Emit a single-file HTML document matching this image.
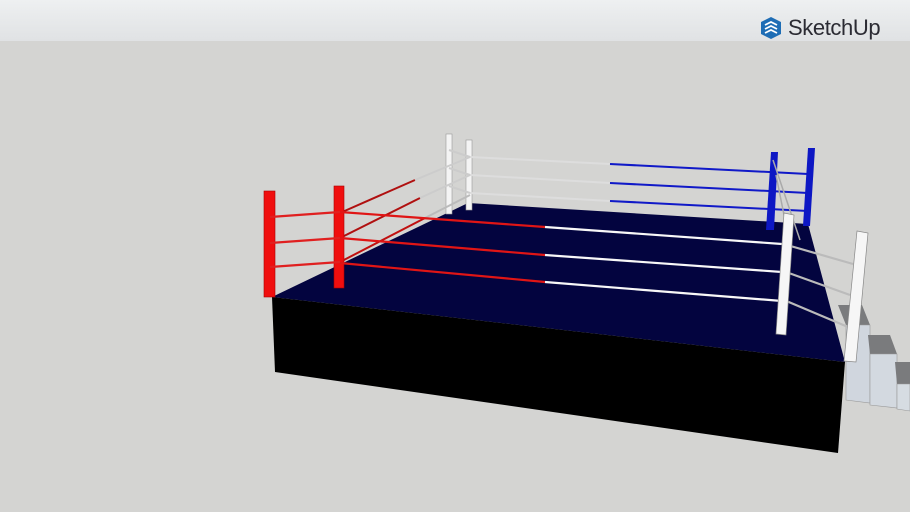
<!DOCTYPE html>
<html><head><style>
html,body{margin:0;padding:0;width:910px;height:512px;overflow:hidden;background:#d4d4d2;}
.hdr{position:absolute;left:0;top:0;width:910px;height:41px;background:linear-gradient(#eef0f1,#e0e2e4);}
.logo{position:absolute;left:760px;top:15px;display:flex;align-items:center;font-family:"Liberation Sans",sans-serif;font-size:22px;color:#2b2b33;letter-spacing:-0.4px;}
svg{position:absolute;left:0;top:0;}
</style></head><body>
<div class="hdr"></div>
<div class="logo"><svg style="position:static;margin-right:6px" width="22" height="24" viewBox="0 0 22 24"><path d="M11 1 L21 6 L21 18 L11 23 L1 18 L1 6Z" fill="#1e6db5"/><path d="M5 9 L11 6 L17 9 M5 13 L11 10 L17 13 M5 17 L11 14 L17 17" stroke="#fff" stroke-width="1.8" fill="none"/></svg>SketchUp</div>
<svg width="910" height="512" viewBox="0 0 910 512">
<!-- stairs -->
<polygon points="838,305 862,305 870,325 846,325" fill="#7a7b7d"/>
<polygon points="846,325 870,325 870,403 846,400" fill="#d0d6de" stroke="#999" stroke-width="0.6"/>
<polygon points="868,335 890,335 897,354 870,354" fill="#7a7b7d"/>
<polygon points="870,354 897,354 897,408 870,405" fill="#d3d9e0" stroke="#999" stroke-width="0.6"/>
<polygon points="895,362 910,362 910,384 897,384" fill="#7a7b7d"/>
<polygon points="897,384 910,384 910,411 897,409" fill="#d6dce2" stroke="#999" stroke-width="0.6"/>
<polygon points="380,243 420,230 423,246 392,256" fill="#b8c0cc"/>
<!-- mat -->
<polygon points="272,297 468,203 808,224 845,362" fill="#03043f"/>
<polygon points="272,297 845,362 838,453 275,372" fill="#000"/>
<rect x="446" y="134" width="6" height="80" fill="#f4f4f4" stroke="#999" stroke-width="0.6"/>
<rect x="466" y="140" width="6" height="70" fill="#f4f4f4" stroke="#999" stroke-width="0.6"/>
<g stroke-width="2" fill="none">
<path d="M470,157 L610,164" stroke="#ddd"/><path d="M610,164 L808,174" stroke="#1019c8"/>
<path d="M470,175 L610,183" stroke="#ddd"/><path d="M610,183 L808,193" stroke="#1019c8"/>
<path d="M470,193 L610,201" stroke="#ddd"/><path d="M610,201 L808,211" stroke="#1019c8"/>
<path d="M449,150 L470,157 M449,168 L470,175 M449,186 L470,193" stroke="#ccc"/>
<path d="M340,213 L415,180" stroke="#b01010"/><path d="M415,180 L470,157" stroke="#ccc"/>
<path d="M340,238 L420,198" stroke="#b01010"/><path d="M420,198 L470,175" stroke="#ccc"/>
<path d="M340,262 L425,218" stroke="#c01010"/><path d="M425,218 L470,195" stroke="#bbb"/>
</g>
<polygon points="771,152 778,152 774,230 766,230" fill="#0d17c4"/>
<polygon points="808,148 815,148 810,226 803,226" fill="#0d17c4"/>
<path d="M773,160 L800,240 M776,175 L790,245" stroke="#aaa" stroke-width="1.5"/>
<rect x="264" y="191" width="11" height="106" fill="#f00e0e" stroke="#a00" stroke-width="0.6"/>
<rect x="334" y="186" width="10" height="102" fill="#f00e0e" stroke="#a00" stroke-width="0.6"/>
<g stroke-width="2.2" fill="none">
<path d="M270,217 L340,212 M270,243 L340,238 M270,267 L340,262" stroke="#e02020"/>
<path d="M340,212 L545,227" stroke="#e01515"/><path d="M545,227 L782,244" stroke="#f8f8f8"/>
<path d="M340,238 L545,255" stroke="#e01515"/><path d="M545,255 L782,272" stroke="#f8f8f8"/>
<path d="M340,263 L545,282" stroke="#e01515"/><path d="M545,282 L782,301" stroke="#f8f8f8"/>
<path d="M787,245 L853,264 M786,272 L850,295 M784,300 L848,327" stroke="#bbb"/>
</g>
<polygon points="784,213 794,215 786,335 776,334" fill="#f6f6f6" stroke="#888" stroke-width="0.7"/>
<polygon points="857,231 868,233 856,362 844,361" fill="#f6f6f6" stroke="#888" stroke-width="0.7"/>
</svg>
</body></html>
